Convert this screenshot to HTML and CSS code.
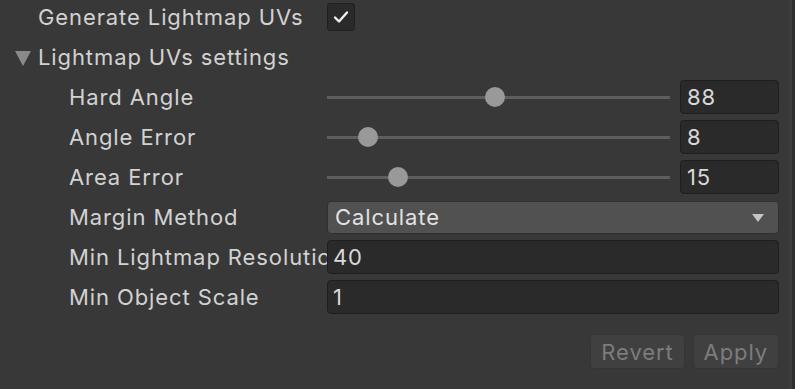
FILE: index.html
```html
<!DOCTYPE html>
<html lang="en">
<head>
  <meta charset="UTF-8" />
  <title>Lightmap UVs</title>
  <link rel="stylesheet" href="styles.css">
</head>
<body>
  <div class="panel">
    <div class="row">
      <div class="label top">Generate Lightmap UVs</div>
      <div class="control">
        <span class="checkbox">
          <svg width="18" height="18" viewBox="0 0 18 18"><path d="M3 9.5 L7 13.5 L15 4.5" fill="none" stroke="#f0f0f0" stroke-width="2.4" stroke-linecap="round" stroke-linejoin="round"/></svg>
        </span>
      </div>
    </div>
    <div class="row">
      <div class="label foldout"><span class="arrow"></span>Lightmap UVs settings</div>
    </div>

    <div class="row">
      <div class="label sub">Hard Angle</div>
      <div class="control slider-row">
        <div class="slider"><div class="track"></div><div class="thumb" style="left: 168px"></div></div>
        <div class="field num">88</div>
      </div>
    </div>
    <div class="row">
      <div class="label sub">Angle Error</div>
      <div class="control slider-row">
        <div class="slider"><div class="track"></div><div class="thumb" style="left: 41px"></div></div>
        <div class="field num">8</div>
      </div>
    </div>
    <div class="row">
      <div class="label sub">Area Error</div>
      <div class="control slider-row">
        <div class="slider"><div class="track"></div><div class="thumb" style="left: 71px"></div></div>
        <div class="field num">15</div>
      </div>
    </div>
    <div class="row">
      <div class="label sub">Margin Method</div>
      <div class="control">
        <div class="dropdown">Calculate<span class="caret"></span></div>
      </div>
    </div>
    <div class="row">
      <div class="label sub">Min Lightmap Resolution</div>
      <div class="control"><div class="field">40</div></div>
    </div>
    <div class="row">
      <div class="label sub">Min Object Scale</div>
      <div class="control"><div class="field">1</div></div>
    </div>

    <div class="buttons">
      <button class="btn">Revert</button>
      <button class="btn">Apply</button>
    </div>
  </div>
  <div class="edge"></div>
</body>
</html>
```

FILE: styles.css
```css
html, body {
  margin: 0;
  height: 100%;
  background-color: #383838;
  overflow: hidden;
}

body {
  font-family: Inter, "Noto Sans", sans-serif;
  font-size: 22px;
  letter-spacing: 0.9px;
  color: #d2d2d2;
  position: relative;
}

.panel {
  margin-top: -3px;
  width: 779px;
}

.row {
  display: grid;
  grid-template-columns: 327px 1fr;
  height: 40px;
  align-items: center;
}

.label {
  white-space: nowrap;
  overflow: hidden;
}

.label.top {
  padding-left: 38px;
}

.label.foldout {
  grid-column: 1 / 3;
  display: flex;
  align-items: center;
  padding-left: 15px;
}

.arrow {
  width: 0;
  height: 0;
  border-left: 8px solid transparent;
  border-right: 8px solid transparent;
  border-top: 15px solid #8a8a8a;
  margin-right: 7px;
  margin-top: 2px;
}

.label.sub {
  padding-left: 69px;
  padding-right: 2px;
}

.control {
  display: flex;
  align-items: center;
  height: 100%;
}

.checkbox {
  width: 26px;
  height: 26px;
  background-color: #2a2a2a;
  border: 1px solid #202020;
  border-radius: 3px;
  display: flex;
  align-items: center;
  justify-content: center;
}

.slider-row {
  gap: 10px;
}

.slider {
  position: relative;
  flex: 1;
  height: 100%;
}

.track {
  position: absolute;
  left: 0;
  right: 0;
  top: 19px;
  height: 3px;
  background-color: #5e5e5e;
}

.thumb {
  position: absolute;
  top: 10px;
  width: 20px;
  height: 20px;
  margin-left: -10px;
  border-radius: 50%;
  background-color: #999999;
}

.field {
  flex: 1;
  box-sizing: border-box;
  height: 34px;
  line-height: 32px;
  padding-left: 5px;
  background-color: #2a2a2a;
  border: 1px solid #1e1e1e;
  border-radius: 4px;
  color: #d8d8d8;
}

.field.num {
  flex: 0 0 99px;
  padding-left: 6px;
}

.dropdown {
  flex: 1;
  box-sizing: border-box;
  height: 33px;
  line-height: 31px;
  padding-left: 7px;
  background-color: #515151;
  border: 1px solid #303030;
  border-radius: 4px;
  color: #e2e2e2;
  position: relative;
}

.caret {
  position: absolute;
  right: 14px;
  top: 12px;
  width: 0;
  height: 0;
  border-left: 6px solid transparent;
  border-right: 6px solid transparent;
  border-top: 8px solid #c4c4c4;
}

.buttons {
  display: flex;
  justify-content: flex-end;
  gap: 8px;
  margin-top: 17px;
}

.btn {
  font-family: Inter, "Noto Sans", sans-serif;
  font-size: 22px;
  letter-spacing: 0.9px;
  color: #7c7c7c;
  background-color: #404040;
  border: 1px solid #353535;
  border-radius: 4px;
  height: 35px;
  padding: 0 10px;
}

.edge {
  position: absolute;
  top: 0;
  bottom: 0;
  left: 789px;
  width: 3px;
  background-color: #3d3d3d;
  border-right: 3px solid #2f2f2f;
}
```
